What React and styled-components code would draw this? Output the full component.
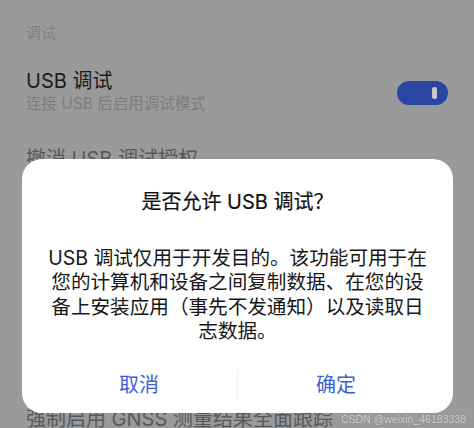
import React from 'react'
import styled, { createGlobalStyle } from 'styled-components'

const GlobalStyle = createGlobalStyle`
body{
    margin: 0;
    background: #9a9a9a;
    font-family: Inter, "Noto Sans CJK SC", sans-serif;
}
`

const bodyLines = [
    'USB 调试仅用于开发目的。该功能可用于在',
    '您的计算机和设备之间复制数据、在您的设',
    '备上安装应用（事先不发通知）以及读取日',
    '志数据。',
]

const App = () => {
    return (
        <Screen>
            <GlobalStyle />
            <Settings>
                <SectionHeader>调试</SectionHeader>
                <Row>
                    <RowText>
                        <RowTitle>USB 调试</RowTitle>
                        <RowSub>连接 USB 后启用调试模式</RowSub>
                    </RowText>
                    <Toggle>
                        <Knob />
                    </Toggle>
                </Row>
                <PlainItem>撤消 USB 调试授权</PlainItem>
                <PlainItem gap={234}>强制启用 GNSS 测量结果全面跟踪</PlainItem>
            </Settings>

            <Dialog>
                <DialogTitle>是否允许 USB 调试？</DialogTitle>
                <DialogBody>
                    {bodyLines.map((line, i) => (
                        <span key={i}>{line}</span>
                    ))}
                </DialogBody>
                <Buttons>
                    <DialogButton>取消</DialogButton>
                    <Divider />
                    <DialogButton>确定</DialogButton>
                </Buttons>
            </Dialog>

            <Watermark>CSDN @weixin_46183338</Watermark>
        </Screen>
    )
}

export default App

const Screen = styled.div`
position: relative;
width: 474px;
height: 428px;
overflow: hidden;
background: #9a9a9a;
`
const Settings = styled.div`
padding: 23px 26px 0 26px;
display: flex;
flex-direction: column;
`
const SectionHeader = styled.div`
font-size: 15px;
line-height: 20px;
color: #808080;
`
const Row = styled.div`
display: flex;
align-items: center;
justify-content: space-between;
margin-top: 25px;
`
const RowText = styled.div`
display: flex;
flex-direction: column;
`
const RowTitle = styled.div`
font-size: 20px;
line-height: 26px;
color: #1c1c1c;
`
const RowSub = styled.div`
font-size: 15.5px;
line-height: 20px;
color: #7d7d7d;
`
const Toggle = styled.div`
width: 51px;
height: 24px;
border-radius: 12px;
background: #2a46a3;
display: flex;
align-items: center;
justify-content: flex-end;
padding-right: 11px;
box-sizing: border-box;
margin-top: 4px;
`
const Knob = styled.div`
width: 5px;
height: 12px;
border-radius: 3px;
background: #c9c9c9;
`
const PlainItem = styled.div`
font-size: 20px;
line-height: 26px;
color: #595959;
margin-top: ${p => p.gap || 32}px;
`
const Dialog = styled.div`
position: absolute;
left: 22px;
top: 159px;
width: 431px;
height: 254px;
background: #ffffff;
border-radius: 20px;
display: flex;
flex-direction: column;
align-items: center;
box-sizing: border-box;
padding: 29px 19px 0;
`
const DialogTitle = styled.div`
font-size: 20px;
line-height: 28px;
font-weight: 400;
color: #111111;
-webkit-text-stroke: 0.2px #111111;
`
const DialogBody = styled.div`
margin-top: 30px;
display: flex;
flex-direction: column;
align-items: center;
font-size: 19.6px;
line-height: 24.3px;
color: #161616;
white-space: nowrap;
`
const Buttons = styled.div`
margin-top: 20px;
width: 100%;
display: flex;
align-items: center;
height: 44px;
`
const DialogButton = styled.div`
flex: 1;
text-align: center;
font-size: 20px;
line-height: 44px;
color: #3b5fd6;
`
const Divider = styled.div`
width: 1px;
height: 30px;
background: #f1f1f1;
`
const Watermark = styled.div`
position: absolute;
right: 8px;
bottom: 3px;
font-family: "Liberation Sans", Arial, sans-serif;
font-size: 10.5px;
color: #d2d2d2;
text-shadow: 0 0 1px #777;
`
